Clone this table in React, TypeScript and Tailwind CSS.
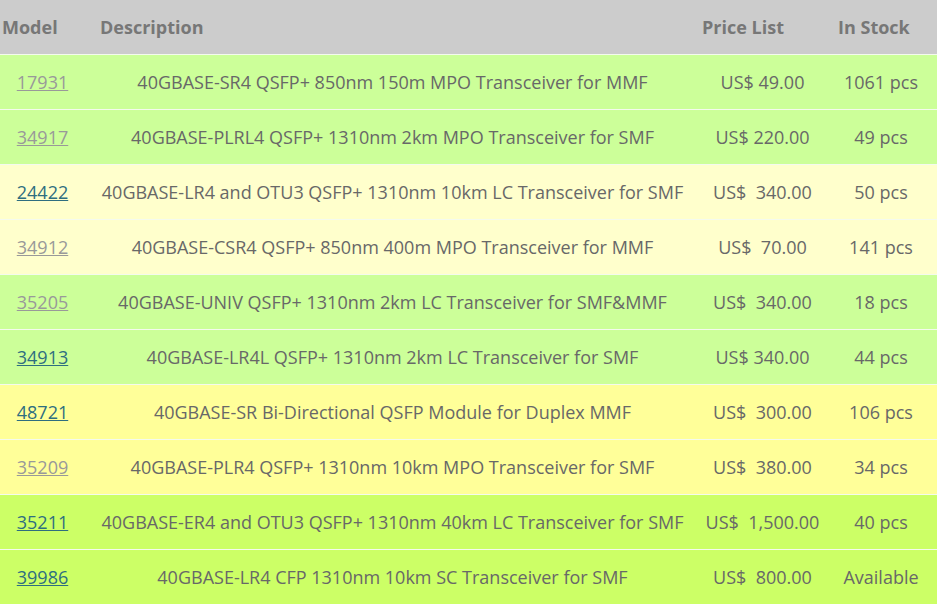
import React from "react";

type Row = { model: string; visited: boolean; desc: string; price: string; stock: string; bg: string };

const rows: Row[] = [
  { model: "17931", visited: true, desc: "40GBASE-SR4 QSFP+ 850nm 150m MPO Transceiver for MMF", price: "US$ 49.00", stock: "1061 pcs", bg: "bg-[#ccff99]" },
  { model: "34917", visited: true, desc: "40GBASE-PLRL4 QSFP+ 1310nm 2km MPO Transceiver for SMF", price: "US$ 220.00", stock: "49 pcs", bg: "bg-[#ccff99]" },
  { model: "24422", visited: false, desc: "40GBASE-LR4 and OTU3 QSFP+ 1310nm 10km LC Transceiver for SMF", price: "US$  340.00", stock: "50 pcs", bg: "bg-[#ffffcc]" },
  { model: "34912", visited: true, desc: "40GBASE-CSR4 QSFP+ 850nm 400m MPO Transceiver for MMF", price: "US$  70.00", stock: "141 pcs", bg: "bg-[#ffffcc]" },
  { model: "35205", visited: true, desc: "40GBASE-UNIV QSFP+ 1310nm 2km LC Transceiver for SMF&MMF", price: "US$  340.00", stock: "18 pcs", bg: "bg-[#ccff99]" },
  { model: "34913", visited: false, desc: "40GBASE-LR4L QSFP+ 1310nm 2km LC Transceiver for SMF", price: "US$ 340.00", stock: "44 pcs", bg: "bg-[#ccff99]" },
  { model: "48721", visited: false, desc: "40GBASE-SR Bi-Directional QSFP Module for Duplex MMF", price: "US$  300.00", stock: "106 pcs", bg: "bg-[#ffff99]" },
  { model: "35209", visited: true, desc: "40GBASE-PLR4 QSFP+ 1310nm 10km MPO Transceiver for SMF", price: "US$  380.00", stock: "34 pcs", bg: "bg-[#ffff99]" },
  { model: "35211", visited: false, desc: "40GBASE-ER4 and OTU3 QSFP+ 1310nm 40km LC Transceiver for SMF", price: "US$  1,500.00", stock: "40 pcs", bg: "bg-[#ccff66]" },
  { model: "39986", visited: false, desc: "40GBASE-LR4 CFP 1310nm 10km SC Transceiver for SMF", price: "US$  800.00", stock: "Available", bg: "bg-[#ccff66]" },
];

export default function App() {
  return (
    <div className="w-[937px] h-[606px] bg-white overflow-hidden" style={{ fontFamily: '"Open Sans", "Liberation Sans", sans-serif' }}>
      <table className="w-[937px] border-collapse table-fixed text-[18px] text-[#686868]">
        <colgroup>
          <col className="w-[85px]" />
          <col className="w-[615px]" />
          <col className="w-[125px]" />
          <col className="w-[112px]" />
        </colgroup>
        <thead>
          <tr className="h-[54px] bg-[#cccccc] text-[#777777] font-bold">
            <th className="text-left pl-[2px] pt-[2px] font-bold">Model</th>
            <th className="text-left pl-[15px] pt-[2px] font-bold">Description</th>
            <th className="text-left pl-[2px] pt-[2px] font-bold">Price List</th>
            <th className="text-left pl-[13px] pt-[2px] font-bold">In Stock</th>
          </tr>
        </thead>
        <tbody>
          {rows.map((r) => (
            <tr key={r.model} className={`h-[55px] border-t border-[#f4faee] ${r.bg}`}>
              <td className="text-center pt-[2px]">
                <a href="#" className={`underline ${r.visited ? "text-[#999999]" : "text-[#2e6e80]"}`}>{r.model}</a>
              </td>
              <td className="text-center whitespace-nowrap pt-[2px]">{r.desc}</td>
              <td className="text-center whitespace-pre pt-[2px]">{r.price}</td>
              <td className="text-center whitespace-nowrap pt-[2px]">{r.stock}</td>
            </tr>
          ))}
        </tbody>
      </table>
    </div>
  );
}
